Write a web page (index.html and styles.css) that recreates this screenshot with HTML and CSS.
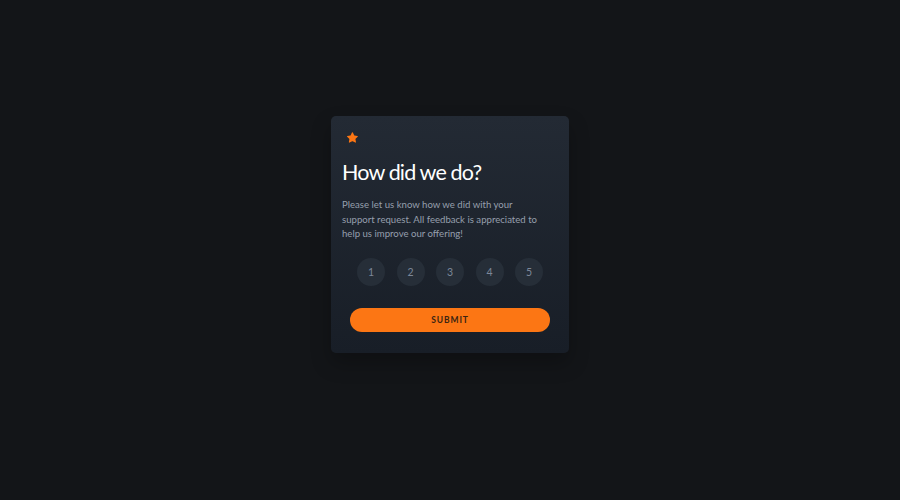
FILE: index.html
```html
<!DOCTYPE html>
<html lang="en">
<head>
<meta charset="utf-8">
<title>Rating</title>
<link rel="stylesheet" href="styles.css">
</head>
<body>
<main class="page">
  <section class="card">
    <div class="star">
      <svg width="11" height="11" viewBox="0 0 17 16" aria-hidden="true"><path fill="#FC7614" d="M9.067.43l1.99 4.031c.112.228.33.386.58.422l4.45.647a.772.772 0 0 1 .427 1.316l-3.22 3.138a.773.773 0 0 0-.222.683l.76 4.431a.772.772 0 0 1-1.12.813l-3.980-2.092a.773.773 0 0 0-.718 0l-3.98 2.092a.772.772 0 0 1-1.119-.813l.76-4.431a.77.77 0 0 0-.222-.683L.233 6.846A.772.772 0 0 1 .661 5.530l4.449-.647a.772.772 0 0 0 .58-.422L7.68.43a.774.774 0 0 1 1.387 0Z"/></svg>
    </div>
    <h1 class="title">How did we do?</h1>
    <p class="text">Please let us know how we did with your support request. All feedback is appreciated to help us improve our offering!</p>
    <div class="ratings">
      <button class="rate">1</button>
      <button class="rate">2</button>
      <button class="rate">3</button>
      <button class="rate">4</button>
      <button class="rate">5</button>
    </div>
    <button class="submit">SUBMIT</button>
  </section>
</main>
</body>
</html>
```
FILE: styles.css
```css
* { box-sizing: border-box; }
html, body { margin: 0; height: 100%; }
body {
  background: #131518;
  font-family: "Lato", "Liberation Sans", sans-serif;
}
.page {
  height: 500px;
  display: flex;
  align-items: flex-start;
  justify-content: center;
  padding-top: 116px;
}
.card {
  width: 238px;
  height: 237px;
  border-radius: 5px;
  background: linear-gradient(180deg, #232a34 0%, #181e27 100%);
  box-shadow: 0 10px 20px rgba(0,0,0,0.25);
  padding: 16px 11px 0 11px;
  display: flex;
  flex-direction: column;
}
.star {
  width: 11px;
  height: 11px;
  margin-left: 5px;
  display: flex;
}
.title {
  margin: 15px 0 0 0;
  color: #ffffff;
  font-weight: 400;
  font-size: 21.5px;
  line-height: 28px;
  letter-spacing: -0.85px;
}
.text {
  margin: 12px 0 0 0;
  max-width: 202px;
  color: #969fad;
  font-size: 9.6px;
  line-height: 14.5px;
}
.ratings {
  display: flex;
  justify-content: center;
  gap: 11.5px;
  margin-top: 16px;
}
.rate {
  width: 28px;
  height: 28px;
  border-radius: 50%;
  border: 0;
  background: #262e38;
  color: #7c8798;
  font-family: inherit;
  font-size: 10.5px;
  padding: 0;
  display: flex;
  align-items: center;
  justify-content: center;
}
.submit {
  align-self: center;
  margin-top: 22px;
  width: 200px;
  height: 24px;
  border: 0;
  border-radius: 12px;
  background: #fc7614;
  color: #3b2412;
  font-family: inherit;
  font-weight: 700;
  font-size: 8.5px;
  letter-spacing: 0.9px;
  padding: 1px 0 0 0;
}
```
